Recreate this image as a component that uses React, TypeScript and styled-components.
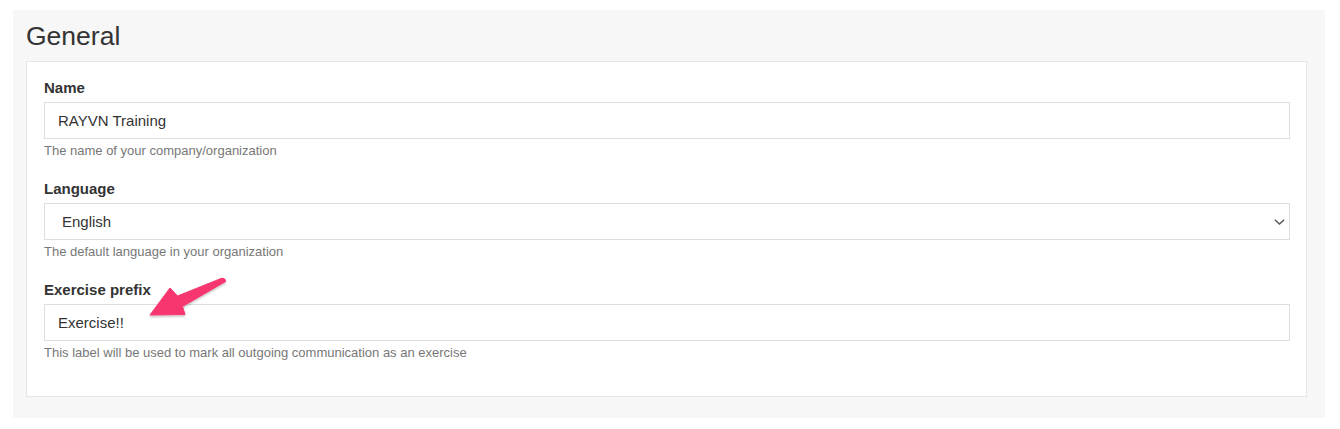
import React from "react";
import styled, { createGlobalStyle } from "styled-components";

const GlobalStyle = createGlobalStyle`
  html, body { margin: 0; padding: 0; background: #ffffff; }
  body { font-family: "Liberation Sans", Arial, Helvetica, sans-serif; color: #333333; }
  * { box-sizing: border-box; }
`;

const Page = styled.div`
  padding: 10px 15px 11px 13px;
`;

const Panel = styled.section`
  background: #f7f7f7;
  padding: 10px 18px 21px 13px;
`;

const Title = styled.h2`
  margin: 0 0 9px 0;
  font-size: 26.5px;
  line-height: 32px;
  font-weight: 400;
  color: #333333;
`;

const Card = styled.div`
  position: relative;
  background: #ffffff;
  border: 1px solid #e6e6e6;
  padding: 17px 16px 36px 17px;
  display: flex;
  flex-direction: column;
  gap: 22px;
`;

const Field = styled.div`
  display: flex;
  flex-direction: column;
`;

const Label = styled.label`
  font-size: 15px;
  line-height: 18px;
  font-weight: 700;
  color: #333333;
  margin-bottom: 5px;
`;

const TextInput = styled.input`
  height: 37px;
  width: 100%;
  border: 1px solid #dedede;
  border-radius: 0;
  padding: 0 12px 0 13px;
  font-family: "Liberation Sans", Arial, sans-serif;
  font-size: 15px;
  color: #333333;
  background: #ffffff;
  outline: none;
`;

const SelectWrap = styled.div`
  position: relative;
`;

const Select = styled.select`
  appearance: none;
  -webkit-appearance: none;
  height: 37px;
  width: 100%;
  border: 1px solid #dedede;
  border-radius: 0;
  padding: 0 30px 0 17px;
  font-family: "Liberation Sans", Arial, sans-serif;
  font-size: 15px;
  color: #333333;
  background: #ffffff;
  outline: none;
`;

const Chevron = styled.svg`
  position: absolute;
  right: 5px;
  top: 16px;
  width: 11px;
  height: 6px;
  pointer-events: none;
`;

const Help = styled.div`
  margin-top: 4px;
  font-size: 13px;
  line-height: 15px;
  color: #777777;
`;

const Arrow = styled.svg`
  position: absolute;
  left: 120px;
  top: 210px;
  width: 85px;
  height: 52px;
  overflow: visible;
  pointer-events: none;
`;

export default function App() {
  return (
    <>
      <GlobalStyle />
      <Page>
        <Panel>
          <Title>General</Title>
          <Card>
            <Field>
              <Label>Name</Label>
              <TextInput defaultValue="RAYVN Training" />
              <Help>The name of your company/organization</Help>
            </Field>
            <Field>
              <Label>Language</Label>
              <SelectWrap>
                <Select defaultValue="en">
                  <option value="en">English</option>
                  <option value="no">Norsk</option>
                </Select>
                <Chevron viewBox="0 0 11 6">
                  <path d="M0.8 0.8 L5.5 5 L10.2 0.8" fill="none" stroke="#555" strokeWidth="1.4" />
                </Chevron>
              </SelectWrap>
              <Help>The default language in your organization</Help>
            </Field>
            <Field>
              <Label>Exercise prefix</Label>
              <TextInput defaultValue="Exercise!!" />
              <Help>This label will be used to mark all outgoing communication as an exercise</Help>
            </Field>
            <Arrow viewBox="0 0 85 52">
              <defs>
                <filter id="sh" x="-20%" y="-20%" width="140%" height="160%">
                  <feDropShadow dx="0" dy="1.5" stdDeviation="1.2" floodColor="#000" floodOpacity="0.25" />
                </filter>
              </defs>
              <path
                d="M3 43 L23 16 L30.5 24 L74 6.5 Q78.5 5.5 78.5 9.5 L35.5 34.5 L38 42.5 Z"
                fill="#f7366e"
                stroke="#f7366e"
                strokeWidth="1"
                strokeLinejoin="round"
                filter="url(#sh)"
              />
            </Arrow>
          </Card>
        </Panel>
      </Page>
    </>
  );
}
